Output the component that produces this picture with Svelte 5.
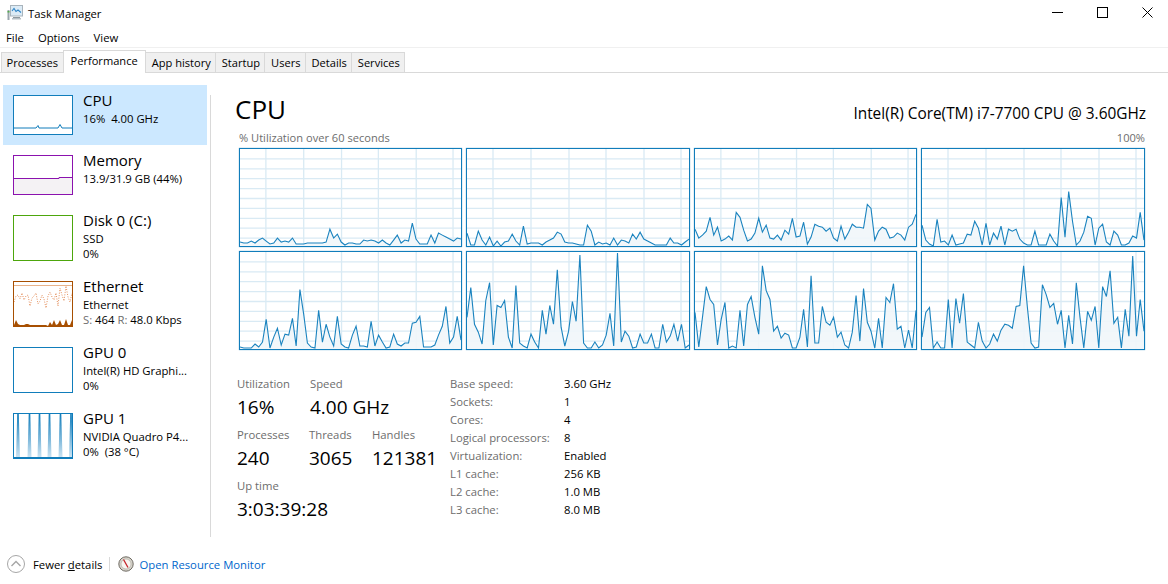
<script>
    const tabs = ['Processes', 'Performance', 'App history', 'Startup', 'Users', 'Details', 'Services'];

    // one array per logical processor, height in px over the chart floor
    const cores = [
        [4,3,3,5,3,6,8,5,2,3,8,4,5,4,8,2,2,2,3,3,3,3,3,4,17,8,12,4,1,3,3,2,2,6,5,6,5,3,6,3,1,6,11,3,6,5,23,7,2,2,2,11,3,13,11,9,7,5,8,7],
        [13,1,1,15,6,1,9,0,5,0,4,5,12,5,1,20,2,3,3,3,1,4,6,8,14,12,4,3,3,2,1,1,21,15,1,4,2,3,1,8,1,6,5,3,12,7,14,7,5,3,1,1,1,1,8,3,3,1,4,7],
        [17,8,11,15,29,11,19,5,7,10,6,34,29,16,5,7,13,28,14,21,8,7,11,6,16,12,28,9,10,24,2,9,22,20,19,15,18,8,5,20,7,14,22,19,19,18,42,38,6,15,19,17,8,9,13,11,6,19,22,32],
        [21,6,2,0,27,4,5,1,11,1,2,3,12,11,25,18,1,23,1,13,7,20,1,17,15,17,7,3,1,1,15,1,1,1,12,5,0,49,9,55,25,1,5,14,30,28,1,18,22,4,1,15,11,1,1,3,10,8,34,6],
        [2,1,1,1,5,2,7,30,1,12,21,4,15,14,31,3,60,35,6,2,1,39,7,25,12,3,33,5,2,1,14,23,3,3,2,28,3,14,7,1,2,15,5,3,6,6,26,27,33,2,2,2,4,14,23,43,6,12,33,9],
        [32,62,25,17,5,49,67,4,44,42,49,12,1,64,6,3,1,15,7,1,39,15,44,25,80,22,3,18,48,28,95,6,1,1,7,1,4,14,36,3,97,7,18,13,1,2,15,6,6,15,1,1,25,7,13,25,8,25,1,4],
        [37,2,32,63,50,45,4,30,47,1,3,1,39,3,45,53,32,15,84,59,50,18,23,11,16,14,1,1,12,40,2,74,6,6,43,27,24,32,12,17,4,1,17,54,8,61,27,18,1,31,1,52,47,66,20,23,1,19,1,39],
        [12,37,42,1,7,1,1,50,1,51,26,56,7,4,1,27,8,1,5,15,8,19,25,24,21,43,44,84,42,6,1,2,65,55,42,46,25,39,1,34,5,67,32,1,38,29,43,1,63,53,79,26,32,1,40,13,94,13,50,18]
    ];

    const W = 222;
    const H = 98;
    const hLines = [10, 20, 30, 40, 50, 60, 70, 80, 90];
    const vLines = [26, 64, 102, 139, 177, 214];

    function line(values) {
        const step = W / (values.length - 1);
        return values.map((v, i) => `${(i * step).toFixed(1)},${H - v}`).join(' ');
    }

    function area(values) {
        return `0,${H} ${line(values)} ${W},${H}`;
    }

    const ethUp = [24,30,31,27,33,26,30,31,20,28,30,33,22,25,31,27,18,30,34,29,26,33,20,38,31,25,40,29,24,33];
    const ethDown = [1,6,2,1,1,1,2,2,1,1,1,1,1,1,1,1,1,0,4,1,6,1,2,6,1,1,7,1,1,6];
    const thumbStep = 58 / (ethUp.length - 1);
    const ethUpPts = ethUp.map((v, i) => `${(i * thumbStep).toFixed(1)},${44 - v}`).join(' ');
    const ethDownPts = `0,44 ${ethDown.map((v, i) => `${(i * thumbStep).toFixed(1)},${44 - v}`).join(' ')} 58,44`;

    const gpuSpikes = [4, 15.5, 25.5, 35.5, 46.5, 57];

    const specs = [
        ['Base speed:', '3.60 GHz'],
        ['Sockets:', '1'],
        ['Cores:', '4'],
        ['Logical processors:', '8'],
        ['Virtualization:', 'Enabled'],
        ['L1 cache:', '256 KB'],
        ['L2 cache:', '1.0 MB'],
        ['L3 cache:', '8.0 MB']
    ];
</script>

<div class="window">
    <header class="titlebar">
        <div class="title">
            <svg class="app-icon" width="16" height="16" viewBox="0 0 16 16">
                <rect x="3.5" y="0.5" width="12" height="10.5" fill="#dcebf6" stroke="#a9b4bc" />
                <polyline points="5,6 7,3.5 9,6.5 11,5 14,7.5" fill="none" stroke="#2f86c8" stroke-width="1.1" />
                <rect x="0.5" y="5" width="2" height="10" fill="#9aa5ad" />
                <rect x="0.5" y="6" width="2" height="1.5" fill="#54b04a" />
                <rect x="6" y="12" width="7" height="1" fill="#8d989f" />
                <rect x="5" y="13" width="9" height="1.5" fill="#b7c0c6" />
            </svg>
            <span>Task Manager</span>
        </div>
        <div class="controls">
            <svg width="11" height="11" viewBox="0 0 11 11"><path d="M0 5.5h11" stroke="#000" fill="none" /></svg>
            <svg width="11" height="11" viewBox="0 0 11 11"><rect x="0.5" y="0.5" width="10" height="10" stroke="#000" fill="none" /></svg>
            <svg width="11" height="11" viewBox="0 0 11 11"><path d="M0.5 0.5l10 10M10.5 0.5l-10 10" stroke="#000" fill="none" /></svg>
        </div>
    </header>

    <nav class="menu">
        <span>File</span>
        <span>Options</span>
        <span>View</span>
    </nav>

    <div class="tabs">
        {#each tabs as tab}
            <div class="tab" class:active={tab === 'Performance'}>{tab}</div>
        {/each}
    </div>

    <div class="body">
        <aside class="side">
            <div class="item selected">
                <svg class="thumb cpu" viewBox="0 0 58 38" preserveAspectRatio="none">
                    <polyline points="0,32 22,32 24,29.5 25,32 44,32 46,28.5 48,32 58,32" fill="none" stroke="#117dbb" />
                </svg>
                <div class="info">
                    <div class="name">CPU</div>
                    <div>16%&nbsp; 4.00 GHz</div>
                </div>
            </div>
            <div class="item">
                <svg class="thumb mem" viewBox="0 0 58 38" preserveAspectRatio="none">
                    <polygon points="0,22.5 45,22.5 45,21.5 58,21.5 58,38 0,38" fill="#f4f2f4" />
                    <polyline points="0,22.5 45,22.5 45,21.5 58,21.5" fill="none" stroke="#8b12ae" />
                </svg>
                <div class="info">
                    <div class="name">Memory</div>
                    <div>13.9/31.9 GB (44%)</div>
                </div>
            </div>
            <div class="item tall">
                <div class="thumb disk"></div>
                <div class="info">
                    <div class="name">Disk 0 (C:)</div>
                    <div>SSD</div>
                    <div>0%</div>
                </div>
            </div>
            <div class="item tall">
                <svg class="thumb eth" viewBox="0 0 58 44" preserveAspectRatio="none">
                    <path d="M0 3.5h58" stroke="#e8b48c" fill="none" />
                    <polyline points={ethUpPts} fill="none" stroke="#e58f5c" stroke-dasharray="1 1.5" />
                    <polygon points={ethDownPts} fill="#a74f01" />
                </svg>
                <div class="info">
                    <div class="name">Ethernet</div>
                    <div>Ethernet</div>
                    <div><span class="dim">S:</span> 464 <span class="dim">R:</span> 48.0 Kbps</div>
                </div>
            </div>
            <div class="item tall">
                <div class="thumb gpu"></div>
                <div class="info">
                    <div class="name">GPU 0</div>
                    <div>Intel(R) HD Graphi...</div>
                    <div>0%</div>
                </div>
            </div>
            <div class="item tall">
                <svg class="thumb gpu" viewBox="0 0 58 44" preserveAspectRatio="none">
                    <defs>
                        <linearGradient id="spike" x1="0" y1="0" x2="0" y2="1">
                            <stop offset="0" stop-color="#117dbb" />
                            <stop offset="1" stop-color="#cfe5f3" />
                        </linearGradient>
                    </defs>
                    {#each gpuSpikes as x}
                        <polygon points="{x - 0.8},0 {x + 0.8},0 {x + 2},44 {x - 2},44" fill="url(#spike)" />
                    {/each}
                    <path d="M0 43.5h58" stroke="#117dbb" fill="none" />
                </svg>
                <div class="info">
                    <div class="name">GPU 1</div>
                    <div>NVIDIA Quadro P4...</div>
                    <div>0%&nbsp; (38 °C)</div>
                </div>
            </div>
        </aside>

        <div class="divider"></div>

        <main class="main">
            <div class="head">
                <h1>CPU</h1>
                <div class="model">Intel(R) Core(TM) i7-7700 CPU @ 3.60GHz</div>
            </div>
            <div class="axis">
                <span>% Utilization over 60 seconds</span>
                <span>100%</span>
            </div>
            <div class="graphs">
                {#each cores as values}
                    <svg class="graph" viewBox="0 0 {W} {H}" preserveAspectRatio="none">
                        {#each hLines as y}
                            <line x1="0" x2={W} y1={y} y2={y} />
                        {/each}
                        {#each vLines as x}
                            <line x1={x} x2={x} y1="0" y2={H} />
                        {/each}
                        <polygon class="fill" points={area(values)} />
                        <polyline class="trace" points={line(values)} />
                    </svg>
                {/each}
            </div>

            <div class="details">
                <div class="stats">
                    <div class="row">
                        <div class="stat util"><label>Utilization</label><b>16%</b></div>
                        <div class="stat"><label>Speed</label><b>4.00 GHz</b></div>
                    </div>
                    <div class="row">
                        <div class="stat proc"><label>Processes</label><b>240</b></div>
                        <div class="stat thr"><label>Threads</label><b>3065</b></div>
                        <div class="stat"><label>Handles</label><b>121381</b></div>
                    </div>
                    <div class="row">
                        <div class="stat"><label>Up time</label><b>3:03:39:28</b></div>
                    </div>
                </div>
                <div class="specs">
                    {#each specs as [key, val]}
                        <span class="key">{key}</span>
                        <span>{val}</span>
                    {/each}
                </div>
            </div>
        </main>
    </div>

    <footer class="footer">
        <svg width="18" height="18" viewBox="0 0 18 18">
            <circle cx="9" cy="9" r="8.5" fill="#fff" stroke="#a6a6a6" />
            <path d="M4.5 11l4.5-4.5 4.5 4.5" fill="none" stroke="#a6a6a6" stroke-width="1.4" />
        </svg>
        <span class="fewer">Fewer <u>d</u>etails</span>
        <div class="sep"></div>
        <svg width="16" height="16" viewBox="0 0 16 16">
            <circle cx="8" cy="8" r="7.2" fill="#d8d5cd" stroke="#6f6b62" />
            <circle cx="8" cy="8" r="5" fill="#f8f6f1" stroke="#a8a498" stroke-width="0.6" />
            <path d="M5.5 3.5l4.5 8" stroke="#c5242a" stroke-width="1.3" fill="none" />
        </svg>
        <span class="link">Open Resource Monitor</span>
    </footer>
</div>

<style>
    :global(body) {
        margin: 0;
        background: #fff;
    }

    .window {
        width: 1168px;
        height: 584px;
        overflow: hidden;
        display: flex;
        flex-direction: column;
        font-family: "Open Sans", "Noto Sans", sans-serif;
        font-size: 11.3px;
        color: #000;
        background: #fff;
    }

    .titlebar {
        height: 29px;
        display: flex;
        align-items: center;
        justify-content: space-between;
    }

    .title {
        display: flex;
        align-items: center;
        gap: 5px;
        padding-left: 7px;
        margin-top: -3px;
    }

    .controls {
        display: flex;
        gap: 34px;
        padding-right: 15px;
        margin-top: -4px;
    }

    .controls svg {
        display: block;
    }

    .menu {
        height: 17px;
        display: flex;
        align-items: center;
        gap: 14px;
        padding: 0 0 1px 6px;
        border-bottom: 1px solid #f0f0f0;
    }

    .tabs {
        display: flex;
        align-items: flex-end;
        height: 24px;
        padding-left: 1px;
        border-bottom: 1px solid #d9d9d9;
    }

    .tab {
        height: 19px;
        line-height: 19px;
        padding: 0 4px 0 6px;
        font-size: 11.1px;
        background: #f0f0f0;
        border: 1px solid #d9d9d9;
        border-bottom: none;
        border-left: none;
    }

    .tab:first-child {
        padding: 0 4.5px;
        border-left: 1px solid #d9d9d9;
    }

    .tab.active {
        height: 21px;
        line-height: 19px;
        padding: 0 7px 1px;
        background: #fff;
        margin-bottom: -1px;
        border-left: 1px solid #d9d9d9;
        margin-left: -1px;
    }

    .body {
        display: flex;
        height: 475px;
    }

    .side {
        width: 204px;
        padding: 12px 0 0 3px;
        flex: none;
    }

    .item {
        height: 60px;
        box-sizing: border-box;
        display: flex;
        gap: 10px;
        padding: 10px 0 0 10px;
    }

    .item.tall {
        height: 66px;
    }

    .item.selected {
        background: #cce8ff;
    }

    .thumb {
        display: block;
        width: 60px;
        height: 40px;
        box-sizing: border-box;
        border: 1px solid #117dbb;
        background: #fff;
        flex: none;
    }

    .tall .thumb {
        height: 46px;
    }

    .mem {
        border-color: #8b12ae;
    }

    .disk {
        border-color: #4da60c;
    }

    .eth {
        border-color: #a74f01;
    }

    .info {
        line-height: 15px;
        margin-top: -5px;
        white-space: nowrap;
    }

    .name {
        font-size: 15px;
        line-height: 21px;
    }

    .dim {
        color: #6d6d6d;
    }

    .divider {
        width: 1px;
        margin: 22px 0 11px 3px;
        background: #d9d9d9;
        flex: none;
    }

    .main {
        flex: 1;
        padding: 0 0 0 28px;
        min-width: 0;
    }

    .head {
        display: flex;
        justify-content: space-between;
        align-items: flex-end;
        height: 54px;
        margin: 0 22px 0 -4px;
    }

    h1 {
        margin: 0;
        font-size: 26px;
        font-weight: 400;
        line-height: 36px;
    }

    .model {
        font-size: 15.4px;
        line-height: 19px;
        padding-bottom: 4px;
    }

    .axis {
        display: flex;
        justify-content: space-between;
        color: #6d6d6d;
        font-size: 11.1px;
        line-height: 15px;
        height: 21px;
        align-items: center;
        margin-right: 23px;
    }

    .graphs {
        display: grid;
        grid-template-columns: 223px 224px 223px 224px;
        grid-auto-rows: 99px;
        gap: 4px;
    }

    .graph {
        display: block;
        width: 100%;
        height: 100%;
        box-sizing: border-box;
        border: 1px solid #117dbb;
        box-shadow: 0 0 1px rgba(17, 125, 187, 0.7);
    }

    .graph line {
        stroke: #d9eaf4;
        stroke-width: 1.3;
    }

    .graph .fill {
        fill: #f1f6fa;
        fill-opacity: 0.9;
    }

    .graph .trace {
        fill: none;
        stroke: #1a83bf;
        stroke-width: 1.1;
    }

    .details {
        display: flex;
        margin-top: 26px;
        margin-left: -2px;
    }

    .stats {
        width: 213px;
        flex: none;
    }

    .row {
        display: flex;
        height: 51px;
    }

    .stat label {
        display: block;
        color: #6d6d6d;
        font-size: 11.3px;
        line-height: 15px;
        margin-bottom: 2px;
    }

    .stat b {
        display: block;
        font-weight: 400;
        font-size: 19px;
        line-height: 28px;
        white-space: nowrap;
    }

    .util {
        width: 73px;
    }

    .proc {
        width: 72px;
    }

    .thr {
        width: 63px;
    }

    .specs {
        display: grid;
        grid-template-columns: 114px auto;
        grid-auto-rows: 18px;
        align-items: center;
        justify-content: start;
        margin-top: -2px;
    }

    .key {
        color: #6d6d6d;
    }

    .footer {
        flex: 1;
        display: flex;
        align-items: center;
        padding: 0 0 4px 7px;
    }

    .fewer {
        margin-left: 8px;
    }

    .sep {
        width: 1px;
        height: 14px;
        background: #d9d9d9;
        margin: 0 8px 0 6px;
    }

    .link {
        color: #0066cc;
        margin-left: 6px;
    }
</style>
